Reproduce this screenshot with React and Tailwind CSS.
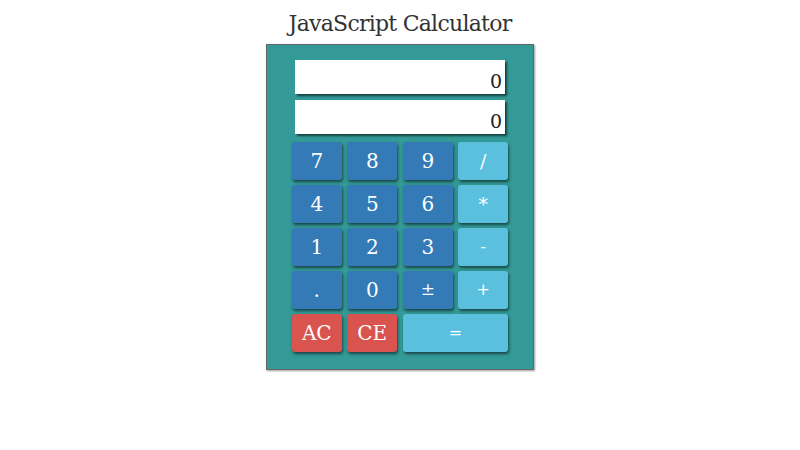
const digitBtn = 'bg-[#337ab7] text-[20px]';
const opBtn = 'bg-[#5bc0de] text-[16px]';
const clearBtn = 'bg-[#d9534f] text-[20px]';

const rows = [
  [
    { label: '7', color: digitBtn },
    { label: '8', color: digitBtn },
    { label: '9', color: digitBtn },
    { label: '/', color: 'bg-[#5bc0de] text-[19px]' },
  ],
  [
    { label: '4', color: digitBtn },
    { label: '5', color: digitBtn },
    { label: '6', color: digitBtn },
    { label: '*', color: 'bg-[#5bc0de] text-[19px]' },
  ],
  [
    { label: '1', color: digitBtn },
    { label: '2', color: digitBtn },
    { label: '3', color: digitBtn },
    { label: '-', color: opBtn },
  ],
  [
    { label: '.', color: digitBtn },
    { label: '0', color: digitBtn },
    { label: '±', color: 'bg-[#337ab7] text-[17px]' },
    { label: '+', color: opBtn },
  ],
];

function Key({ label, color, wide }) {
  return (
    <button
      className={`${color} ${wide ? 'col-span-2' : ''} h-[38px] rounded-[3px] text-white shadow-[1px_2px_3px_rgba(0,0,0,0.55)]`}
    >
      {label}
    </button>
  );
}

export default function App() {
  return (
    <div className="flex flex-col items-center bg-white min-h-[450px] font-['DejaVu_Serif',serif]">
      <h1 className="text-[22px] text-[#333] leading-none pt-[13px] pb-[9px] tracking-[-0.75px]">
        JavaScript Calculator
      </h1>

      <div className="w-[268px] border border-[#666] bg-[#339a97] shadow-[1px_1px_2px_rgba(0,0,0,0.4)] pt-[15px] pb-[17px] flex flex-col items-center">
        <div className="w-[210px] flex flex-col gap-[6px]">
          <div className="h-[34px] bg-white text-right pr-[3px] text-[19px] leading-[42px] text-[#222] shadow-[2px_2px_2px_rgba(0,0,0,0.6)]">
            0
          </div>
          <div className="h-[34px] bg-white text-right pr-[3px] text-[19px] leading-[42px] text-[#222] shadow-[2px_2px_2px_rgba(0,0,0,0.6)]">
            0
          </div>
        </div>

        <div className="mt-[8px] grid grid-cols-[repeat(4,50px)] gap-x-[5.5px] gap-y-[5px]">
          {rows.map((row) =>
            row.map((k) => <Key key={k.label} label={k.label} color={k.color} />)
          )}
          <Key label="AC" color={clearBtn} />
          <Key label="CE" color={clearBtn} />
          <Key label="=" color={opBtn} wide />
        </div>
      </div>
    </div>
  );
}
